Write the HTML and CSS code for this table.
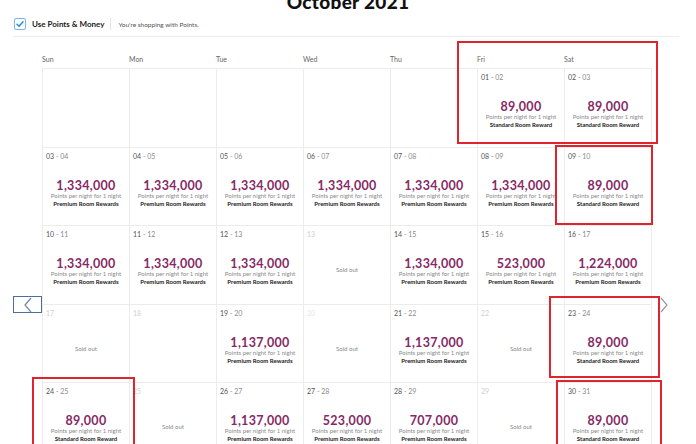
FILE: index.html
```html
<!DOCTYPE html>
<html lang="en">
<head>
<meta charset="utf-8">
<title>October 2021</title>
<link rel="stylesheet" href="styles.css">
</head>
<body>
<div class="page">
  <h1 class="title">October 2021</h1>
  <div class="toolbar">
    <span class="check"><svg width="10" height="10" viewBox="0 0 10 10"><path d="M2 5.2 L4.1 7.2 L8 2.8" fill="none" stroke="#2c8ad8" stroke-width="1.5" stroke-linecap="round" stroke-linejoin="round"/></svg></span>
    <span class="toggle-label">Use Points &amp; Money</span>
    <span class="sep"></span>
    <span class="note">You're shopping with Points.</span>
  </div>
  <div class="calendar">
    <div class="weekdays">
      <div>Sun</div><div>Mon</div><div>Tue</div><div>Wed</div><div>Thu</div><div>Fri</div><div>Sat</div>
    </div>
    <div class="grid">
      <div class="cell"></div><div class="cell"></div><div class="cell"></div><div class="cell"></div><div class="cell"></div>
      <div class="cell"><div class="date"><b>01</b> - 02</div><div class="price">89,000</div><div class="per">Points per night for 1 night</div><div class="type">Standard Room Reward</div></div>
      <div class="cell"><div class="date"><b>02</b> - 03</div><div class="price">89,000</div><div class="per">Points per night for 1 night</div><div class="type">Standard Room Reward</div></div>

      <div class="cell"><div class="date"><b>03</b> - 04</div><div class="price">1,334,000</div><div class="per">Points per night for 1 night</div><div class="type">Premium Room Rewards</div></div>
      <div class="cell"><div class="date"><b>04</b> - 05</div><div class="price">1,334,000</div><div class="per">Points per night for 1 night</div><div class="type">Premium Room Rewards</div></div>
      <div class="cell"><div class="date"><b>05</b> - 06</div><div class="price">1,334,000</div><div class="per">Points per night for 1 night</div><div class="type">Premium Room Rewards</div></div>
      <div class="cell"><div class="date"><b>06</b> - 07</div><div class="price">1,334,000</div><div class="per">Points per night for 1 night</div><div class="type">Premium Room Rewards</div></div>
      <div class="cell"><div class="date"><b>07</b> - 08</div><div class="price">1,334,000</div><div class="per">Points per night for 1 night</div><div class="type">Premium Room Rewards</div></div>
      <div class="cell"><div class="date"><b>08</b> - 09</div><div class="price">1,334,000</div><div class="per">Points per night for 1 night</div><div class="type">Premium Room Rewards</div></div>
      <div class="cell"><div class="date"><b>09</b> - 10</div><div class="price">89,000</div><div class="per">Points per night for 1 night</div><div class="type">Standard Room Reward</div></div>

      <div class="cell"><div class="date"><b>10</b> - 11</div><div class="price">1,334,000</div><div class="per">Points per night for 1 night</div><div class="type">Premium Room Rewards</div></div>
      <div class="cell"><div class="date"><b>11</b> - 12</div><div class="price">1,334,000</div><div class="per">Points per night for 1 night</div><div class="type">Premium Room Rewards</div></div>
      <div class="cell"><div class="date"><b>12</b> - 13</div><div class="price">1,334,000</div><div class="per">Points per night for 1 night</div><div class="type">Premium Room Rewards</div></div>
      <div class="cell sold"><div class="date">13</div><div class="soldout">Sold out</div></div>
      <div class="cell"><div class="date"><b>14</b> - 15</div><div class="price">1,334,000</div><div class="per">Points per night for 1 night</div><div class="type">Premium Room Rewards</div></div>
      <div class="cell"><div class="date"><b>15</b> - 16</div><div class="price">523,000</div><div class="per">Points per night for 1 night</div><div class="type">Premium Room Rewards</div></div>
      <div class="cell"><div class="date"><b>16</b> - 17</div><div class="price">1,224,000</div><div class="per">Points per night for 1 night</div><div class="type">Premium Room Rewards</div></div>

      <div class="cell sold"><div class="date">17</div><div class="soldout">Sold out</div></div>
      <div class="cell sold"><div class="date">18</div></div>
      <div class="cell"><div class="date"><b>19</b> - 20</div><div class="price">1,137,000</div><div class="per">Points per night for 1 night</div><div class="type">Premium Room Rewards</div></div>
      <div class="cell sold"><div class="date faint">20</div><div class="soldout">Sold out</div></div>
      <div class="cell"><div class="date"><b>21</b> - 22</div><div class="price">1,137,000</div><div class="per">Points per night for 1 night</div><div class="type">Premium Room Rewards</div></div>
      <div class="cell sold"><div class="date">22</div><div class="soldout">Sold out</div></div>
      <div class="cell"><div class="date"><b>23</b> - 24</div><div class="price">89,000</div><div class="per">Points per night for 1 night</div><div class="type">Standard Room Reward</div></div>

      <div class="cell"><div class="date"><b>24</b> - 25</div><div class="price">89,000</div><div class="per">Points per night for 1 night</div><div class="type">Standard Room Reward</div></div>
      <div class="cell sold"><div class="date">25</div><div class="soldout">Sold out</div></div>
      <div class="cell"><div class="date"><b>26</b> - 27</div><div class="price">1,137,000</div><div class="per">Points per night for 1 night</div><div class="type">Premium Room Rewards</div></div>
      <div class="cell"><div class="date"><b>27</b> - 28</div><div class="price">523,000</div><div class="per">Points per night for 1 night</div><div class="type">Premium Room Rewards</div></div>
      <div class="cell"><div class="date"><b>28</b> - 29</div><div class="price">707,000</div><div class="per">Points per night for 1 night</div><div class="type">Premium Room Rewards</div></div>
      <div class="cell sold"><div class="date">29</div><div class="soldout">Sold out</div></div>
      <div class="cell"><div class="date"><b>30</b> - 31</div><div class="price">89,000</div><div class="per">Points per night for 1 night</div><div class="type">Standard Room Reward</div></div>
    </div>
  </div>

  <button class="nav prev" aria-label="Previous month"><svg width="10" height="16" viewBox="0 0 10 16"><path d="M8 1 L2 8 L8 15" fill="none" stroke="#6f88aa" stroke-width="1.2"/></svg></button>
  <button class="nav next" aria-label="Next month"><svg width="10" height="16" viewBox="0 0 10 16"><path d="M2 1 L8 8 L2 15" fill="none" stroke="#9a9a9a" stroke-width="1.2"/></svg></button>

  <div class="mark mark-a"></div>
  <div class="mark mark-b"></div>
  <div class="mark mark-c"></div>
  <div class="mark mark-d"></div>
  <div class="mark mark-e"></div>
</div>
</body>
</html>
```

FILE: styles.css
```css
html, body {
  margin: 0;
  padding: 0;
  background: #fff;
  overflow: hidden;
}

body {
  font-family: "Lato", "Open Sans", "DejaVu Sans", sans-serif;
  color: #222;
}

.page {
  position: relative;
  display: flow-root;
  width: 696px;
  height: 444px;
}

.title {
  margin: -8px 0 0;
  font-size: 19px;
  line-height: 20px;
  font-weight: 900;
  text-align: center;
  color: #111;
  letter-spacing: 0.3px;
}

.toolbar {
  display: flex;
  align-items: center;
  height: 24px;
  margin: 0 17px 0 13px;
  padding-left: 1px;
  border-bottom: 1px solid #ececec;
}

.check {
  width: 12px;
  height: 12px;
  box-sizing: border-box;
  border: 1px solid #7bb6e2;
  border-radius: 2px;
  display: flex;
  align-items: center;
  justify-content: center;
  background: #fff;
}

.toggle-label {
  margin-left: 6px;
  font-size: 8px;
  font-weight: 700;
  color: #222;
}

.sep {
  width: 1px;
  height: 12px;
  background: #e2e2e2;
  margin: 0 7px 0 6px;
}

.note {
  font-size: 6.5px;
  color: #555;
}

.calendar {
  margin-left: 42px;
  width: 610px;
}

.weekdays {
  display: grid;
  grid-template-columns: repeat(7, 87px);
  height: 31px;
  align-items: end;
}

.weekdays div {
  font-size: 7px;
  line-height: 8px;
  color: #666;
  padding-bottom: 5px;
}

.grid {
  display: grid;
  grid-template-columns: repeat(7, 87px);
  grid-auto-rows: 78.5px;
  border-right: 1px solid #ececec;
}

.cell {
  box-sizing: border-box;
  border-left: 1px solid #ececec;
  border-top: 1px solid #ececec;
  display: flex;
  flex-direction: column;
  align-items: center;
  text-align: center;
}

.date {
  align-self: stretch;
  text-align: left;
  padding: 4px 0 0 3px;
  font-size: 7px;
  line-height: 8px;
  color: #8a8a8a;
}

.date b {
  font-weight: 400;
  color: #555;
}

.sold .date {
  color: #cfcfcf;
}

.sold .date.faint {
  color: #e6e6e6;
}

.price {
  margin-top: 20px;
  font-size: 12.5px;
  line-height: 12px;
  font-weight: 700;
  color: #862a66;
  letter-spacing: 0.3px;
}

.per {
  font-size: 6px;
  line-height: 8px;
  color: #8a8a8a;
}

.type {
  font-size: 6px;
  line-height: 8px;
  font-weight: 700;
  color: #222;
}

.soldout {
  margin-top: 28px;
  font-size: 6px;
  line-height: 8px;
  color: #888;
}

.nav {
  position: absolute;
  margin: 0;
  padding: 0;
  background: #fff;
  display: flex;
  align-items: center;
  justify-content: center;
  cursor: pointer;
}

.nav.prev {
  left: 13px;
  top: 296px;
  width: 29px;
  height: 17px;
  box-sizing: border-box;
  border: 1.5px solid #4c6ea3;
}

.nav.next {
  left: 659px;
  top: 297px;
  width: 10px;
  height: 16px;
  border: none;
  background: transparent;
}

.mark {
  position: absolute;
  box-sizing: border-box;
  border: 2px solid #e0242f;
  pointer-events: none;
}

.mark-a { left: 457px; top: 41px; width: 201px; height: 103px; }
.mark-b { left: 555px; top: 145px; width: 98px; height: 80px; }
.mark-c { left: 549px; top: 296px; width: 111px; height: 82px; }
.mark-d { left: 32px; top: 377px; width: 103px; height: 80px; }
.mark-e { left: 556px; top: 380px; width: 106px; height: 80px; }
```
